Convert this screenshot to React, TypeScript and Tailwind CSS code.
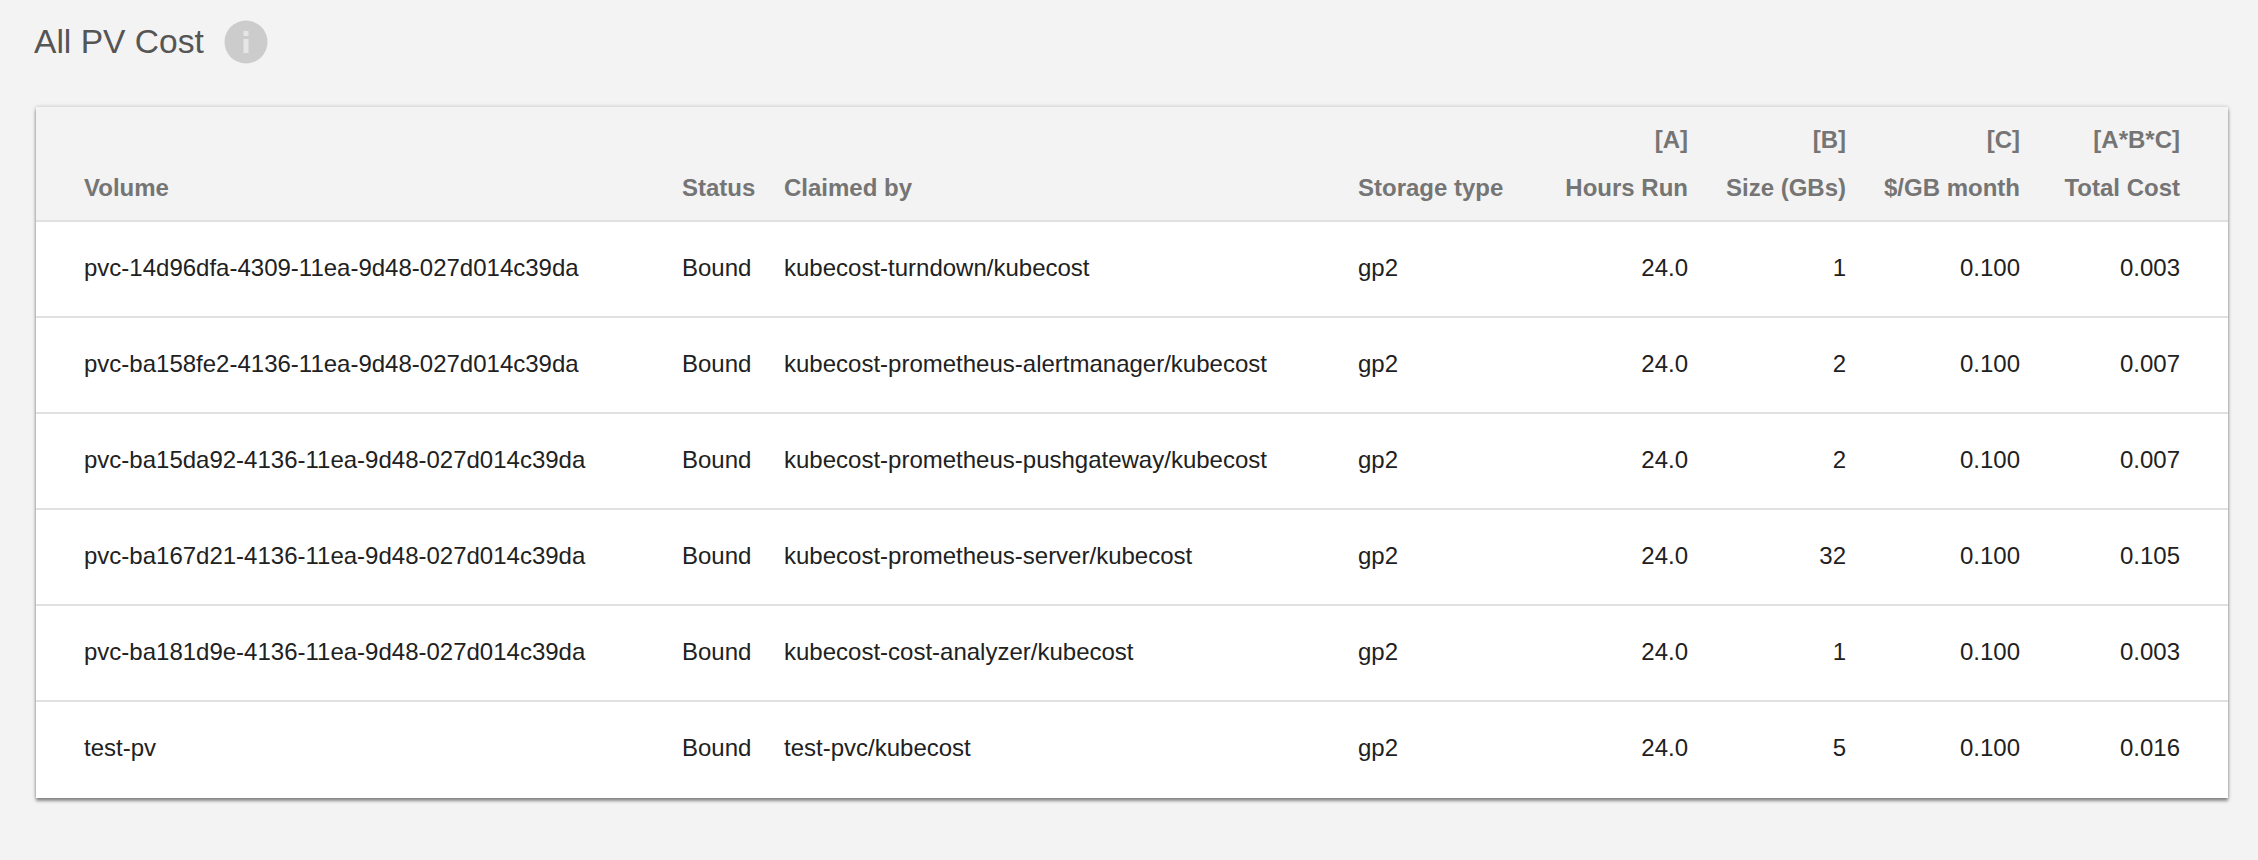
const rows = [
  { volume: "pvc-14d96dfa-4309-11ea-9d48-027d014c39da", claim: "kubecost-turndown/kubecost", size: "1", total: "0.003" },
  { volume: "pvc-ba158fe2-4136-11ea-9d48-027d014c39da", claim: "kubecost-prometheus-alertmanager/kubecost", size: "2", total: "0.007" },
  { volume: "pvc-ba15da92-4136-11ea-9d48-027d014c39da", claim: "kubecost-prometheus-pushgateway/kubecost", size: "2", total: "0.007" },
  { volume: "pvc-ba167d21-4136-11ea-9d48-027d014c39da", claim: "kubecost-prometheus-server/kubecost", size: "32", total: "0.105" },
  { volume: "pvc-ba181d9e-4136-11ea-9d48-027d014c39da", claim: "kubecost-cost-analyzer/kubecost", size: "1", total: "0.003" },
  { volume: "test-pv", claim: "test-pvc/kubecost", size: "5", total: "0.016" },
];

function InfoIcon() {
  return (
    <svg width="44" height="44" viewBox="0 0 44 44" className="block">
      <circle cx="22" cy="22" r="21.5" fill="#cccccc" />
      <rect x="19.5" y="11" width="5" height="5" fill="#e6e6e6" />
      <rect x="19.5" y="19" width="5" height="14" fill="#e6e6e6" />
    </svg>
  );
}

export default function App() {
  return (
    <div className="min-h-[860px] bg-[#f3f3f3] font-['Liberation_Sans',Arial,sans-serif]">
      <div className="flex items-center pl-[34px] pt-[20px]">
        <h2 className="text-[33.6px] leading-[44px] font-normal text-[#555555]">All PV Cost</h2>
        <span className="ml-[20px]">
          <InfoIcon />
        </span>
      </div>

      <div className="mx-[36px] mt-[43px] w-[2192px] shadow-[0_3px_3px_rgba(0,0,0,0.4),0_0_4px_rgba(0,0,0,0.22)]">
        <table className="w-full table-fixed border-collapse text-[24px]">
          <colgroup>
            <col className="w-[646px]" />
            <col className="w-[102px]" />
            <col className="w-[574px]" />
            <col className="w-[142px]" />
            <col className="w-[188px]" />
            <col className="w-[158px]" />
            <col className="w-[174px]" />
            <col className="w-[208px]" />
          </colgroup>
          <thead>
            <tr className="h-[114px] border-b-2 border-[#e0e0e0] bg-[#f3f3f3] align-bottom font-bold text-[#757575]">
              <th className="pb-[14px] pl-[48px] text-left font-bold">Volume</th>
              <th className="pb-[14px] text-left font-bold">Status</th>
              <th className="pb-[14px] text-left font-bold">Claimed by</th>
              <th className="pb-[14px] text-left font-bold whitespace-nowrap">Storage type</th>
              <th className="pb-[14px] text-right font-bold">
                <div className="mb-[12px]">[A]</div>
                <div>Hours Run</div>
              </th>
              <th className="pb-[14px] text-right font-bold">
                <div className="mb-[12px]">[B]</div>
                <div>Size (GBs)</div>
              </th>
              <th className="pb-[14px] text-right font-bold">
                <div className="mb-[12px]">[C]</div>
                <div>$/GB month</div>
              </th>
              <th className="pb-[14px] pr-[48px] text-right font-bold">
                <div className="mb-[12px]">[A*B*C]</div>
                <div>Total Cost</div>
              </th>
            </tr>
          </thead>
          <tbody className="bg-white text-[#212121]">
            {rows.map((r) => (
              <tr key={r.volume} className="h-[96px] border-b-2 border-[#e0e0e0] last:border-white">
                <td className="pb-[2px] pl-[48px]">{r.volume}</td>
                <td className="pb-[2px]">Bound</td>
                <td className="pb-[2px]">{r.claim}</td>
                <td className="pb-[2px]">gp2</td>
                <td className="pb-[2px] text-right">24.0</td>
                <td className="pb-[2px] text-right">{r.size}</td>
                <td className="pb-[2px] text-right">0.100</td>
                <td className="pb-[2px] pr-[48px] text-right">{r.total}</td>
              </tr>
            ))}
          </tbody>
        </table>
      </div>
    </div>
  );
}
